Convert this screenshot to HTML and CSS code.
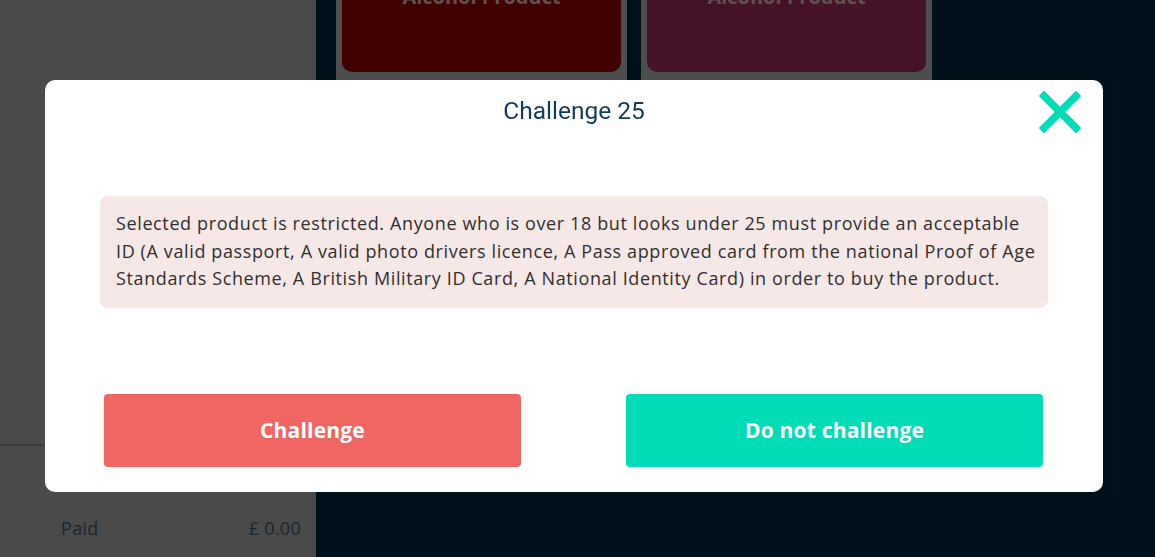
FILE: index.html
```html
<!DOCTYPE html>
<html>
<head>
<meta charset="utf-8">
<link rel="stylesheet" href="styles.css">
</head>
<body>
<div class="app">
  <aside class="side">
    <div class="side-top"></div>
    <div class="side-bottom">
      <div class="paid-row"><span>Paid</span><span>£ 0.00</span></div>
    </div>
  </aside>
  <main class="main">
    <div class="tiles">
      <div class="tile-cell"><div class="tile tile-red"><span>Alcohol Product</span></div></div>
      <div class="tile-cell"><div class="tile tile-plum"><span>Alcohol Product</span></div></div>
    </div>
  </main>
</div>

<div class="overlay">
  <div class="modal">
    <div class="modal-head">
      <h1 class="modal-title">Challenge 25</h1>
      <button class="close" aria-label="Close">
        <svg width="42" height="42" viewBox="0 0 42 42"><path d="M5 5 L37 37 M37 5 L5 37" stroke="#00dcb8" stroke-width="7.5" stroke-linecap="square"/></svg>
      </button>
    </div>
    <div class="notice">Selected product is restricted. Anyone who is over 18 but looks under 25 must provide an acceptable ID (A valid passport, A valid photo drivers licence, A Pass approved card from the national Proof of Age Standards Scheme, A British Military ID Card, A National Identity Card) in order to buy the product.</div>
    <div class="actions">
      <button class="btn btn-challenge">Challenge</button>
      <button class="btn btn-skip">Do not challenge</button>
    </div>
  </div>
</div>
</body>
</html>
```

FILE: styles.css
```css
* { box-sizing: border-box; }
html, body { margin: 0; padding: 0; }
body {
  width: 1155px;
  height: 557px;
  overflow: hidden;
  background: #00111c;
  font-family: "Open Sans", "DejaVu Sans", sans-serif;
}
.app {
  display: flex;
  height: 557px;
}
.side {
  width: 316px;
  background: #4a4a4a;
  display: flex;
  flex-direction: column;
}
.side-top {
  height: 446px;
  border-bottom: 2px solid #3e3e3e;
}
.side-bottom {
  flex: 1;
  padding: 72px 15px 0 61px;
}
.paid-row {
  display: flex;
  justify-content: space-between;
  color: #1c252b;
  font-size: 18px;
  line-height: 20px;
  letter-spacing: 0.3px;
}
.main {
  flex: 1;
  padding-left: 20px;
}
.tiles {
  display: flex;
  gap: 14px;
}
.tile-cell {
  width: 291px;
  height: 90px;
  margin-top: -10px;
  background: #4e4e4e;
  padding: 0 6px 8px 6px;
}
.tile {
  height: 100%;
  border-radius: 0 0 10px 10px;
  text-align: center;
  color: #634f4f;
  font-weight: 700;
  font-size: 20px;
  line-height: 20px;
  overflow: hidden;
}
.tile span { display: block; margin-top: -3px; }
.tile-red { background: #400000; }
.tile-plum { background: #451327; }

.overlay {
  position: fixed;
  left: 0; top: 0;
  width: 1155px; height: 557px;
  padding: 80px 0 0 45px;
}
.modal {
  width: 1058px;
  height: 412px;
  background: #ffffff;
  border-radius: 10px;
  padding: 0 55px 0 55px;
  display: flex;
  flex-direction: column;
}
.modal-head {
  position: relative;
  height: 116px;
}
.modal-title {
  margin: 0;
  padding-top: 17px;
  text-align: center;
  font-family: Roboto, "Liberation Sans", sans-serif;
  font-weight: 400;
  font-size: 24.5px;
  line-height: 28px;
  color: #123a5a;
}
.close {
  position: absolute;
  right: -33px;
  top: 11px;
  background: none;
  border: 0;
  padding: 0;
  width: 42px;
  height: 42px;
}
.close svg { display: block; }
.notice {
  height: 112px;
  background: #f7e8e8;
  border-radius: 8px;
  padding: 14px 6px 0 16px;
  color: #2f2f2f;
  font-size: 18px;
  letter-spacing: 0.62px;
  line-height: 27.5px;
}
.actions {
  display: flex;
  justify-content: space-between;
  margin-top: 86px;
  padding: 0 5px 0 4px;
}
.btn {
  width: 417px;
  height: 73px;
  border: 0;
  border-radius: 4px;
  color: #ffffff;
  font-family: "Open Sans", "DejaVu Sans", sans-serif;
  font-weight: 700;
  font-size: 21px;
  letter-spacing: 0.2px;
  padding-bottom: 2px;
}
.btn-challenge { background: #f06663; }
.btn-skip { background: #00dcb8; }
```
